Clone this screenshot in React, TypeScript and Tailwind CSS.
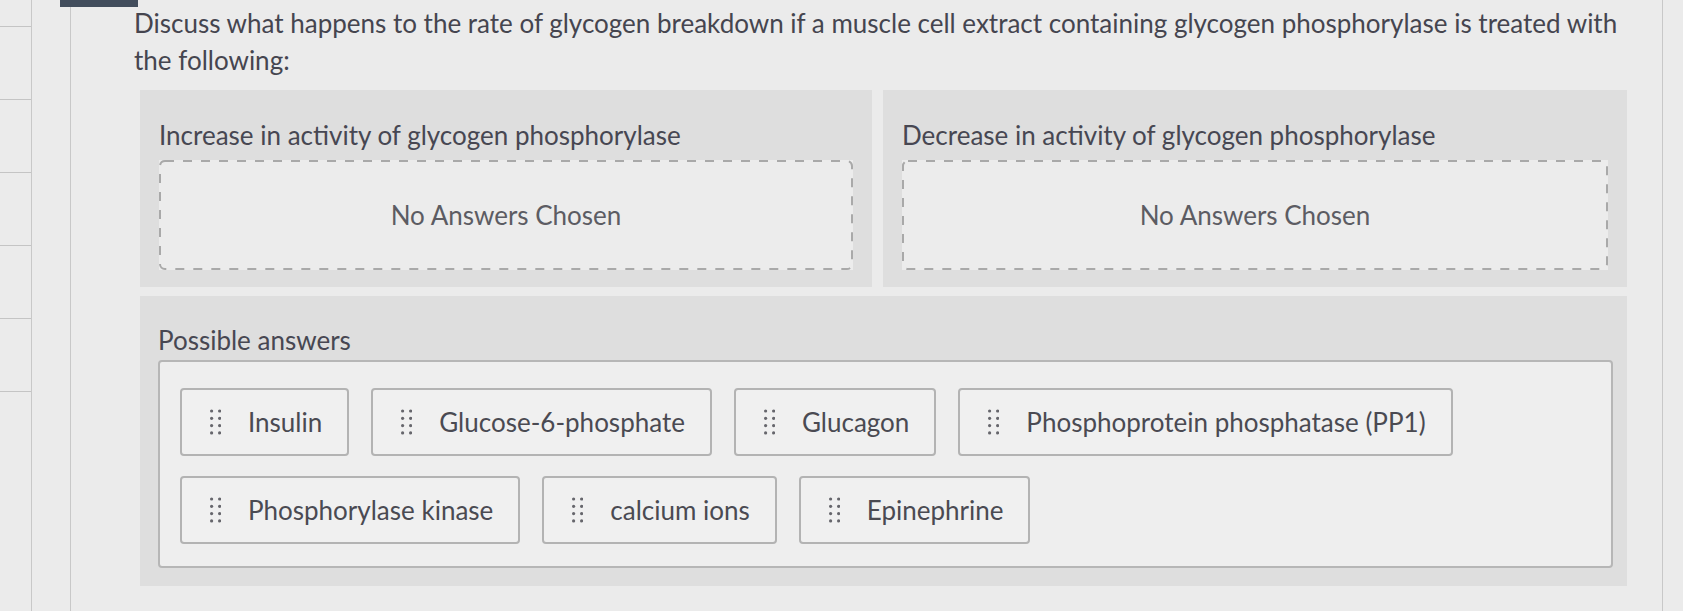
import React from 'react'

type Chip = { label: string }

const answers: Chip[] = [
  { label: 'Insulin' },
  { label: 'Glucose-6-phosphate' },
  { label: 'Glucagon' },
  { label: 'Phosphoprotein phosphatase (PP1)' },
  { label: 'Phosphorylase kinase' },
  { label: 'calcium ions' },
  { label: 'Epinephrine' },
]

// 2 x 4 dot grip used on draggable answers
function Grip() {
  return (
    <svg width="11" height="26" viewBox="0 0 11 26" className="shrink-0">
      {[0, 1, 2, 3].map((r) =>
        [0, 1].map((c) => (
          <circle key={`${r}-${c}`} cx={1.6 + c * 8} cy={2 + r * 7.3} r="1.6" fill="#66666c" />
        ))
      )}
    </svg>
  )
}

function DropZone({ title, width }: { title: string; width: number }) {
  const inner = width - 38
  return (
    <div className="bg-[#dedede] pt-[30px] pb-[17px] px-[19px]" style={{ width }}>
      <h3 className="text-[26px] leading-[30px] text-[#474752]">{title}</h3>
      <div className="relative mt-[10px] h-[110px] bg-[#ececec] flex items-center justify-center">
        <svg className="absolute inset-0" width={inner} height={110}>
          <rect
            x="1"
            y="1"
            width={inner - 2}
            height="108"
            rx="5"
            fill="none"
            stroke="#a9a9a9"
            strokeWidth="2"
            strokeDasharray="9 9"
          />
        </svg>
        <span className="text-[26px] text-[#5c5c63]">No Answers Chosen</span>
      </div>
    </div>
  )
}

export default function App() {
  return (
    <div className="relative flex h-[611px] w-[1683px] overflow-hidden bg-[#ebebeb] font-['Lato','Noto_Sans',sans-serif]">
      {/* left nav strip */}
      <div className="w-[32px] shrink-0 border-r border-[#c8c8c8] flex flex-col">
        <div className="h-[27px] border-b border-[#c4c4c4]" />
        {[0, 1, 2, 3, 4].map((i) => (
          <div key={i} className="h-[73px] border-b border-[#c4c4c4]" />
        ))}
      </div>
      <div className="w-[39px] shrink-0 border-r border-[#c8c8c8]" />
      <div className="absolute left-[60px] top-0 h-[7px] w-[78px] bg-[#424d5c]" />

      <main className="w-[1591px] shrink-0 pl-[63px] pt-[5px]">
        <p className="text-[26px] leading-[37px] text-[#45454f] whitespace-nowrap">
          Discuss what happens to the rate of glycogen breakdown if a muscle cell extract containing glycogen phosphorylase is treated with
          <br />
          the following:
        </p>

        <div className="ml-[6px] mt-[11px] w-[1487px]">
          <div className="flex gap-[11px]">
            <DropZone title="Increase in activity of glycogen phosphorylase" width={732} />
            <DropZone title="Decrease in activity of glycogen phosphorylase" width={744} />
          </div>

          <div className="mt-[9px] bg-[#dedede] pt-[30px] pb-[18px] pl-[18px] pr-[14px]">
            <h3 className="text-[26px] leading-[28px] text-[#474752]">Possible answers</h3>
            <div className="mt-[6px] rounded-[4px] border-2 border-[#b6b6b6] bg-[#eeeeee] pt-[26px] pb-[22px] px-[20px] flex flex-wrap gap-x-[22px] gap-y-[20px]">
              {answers.map((a) => (
                <div
                  key={a.label}
                  className="h-[68px] flex items-center gap-[27px] rounded-[4px] border-2 border-[#b3b3b3] bg-[#f0f0f0] pl-[28px] pr-[25px]"
                >
                  <Grip />
                  <span className="text-[26px] text-[#4a4a52] whitespace-nowrap">{a.label}</span>
                </div>
              ))}
            </div>
          </div>
        </div>
      </main>

      <div className="flex-1 border-l border-[#c8c8c8]" />
    </div>
  )
}
